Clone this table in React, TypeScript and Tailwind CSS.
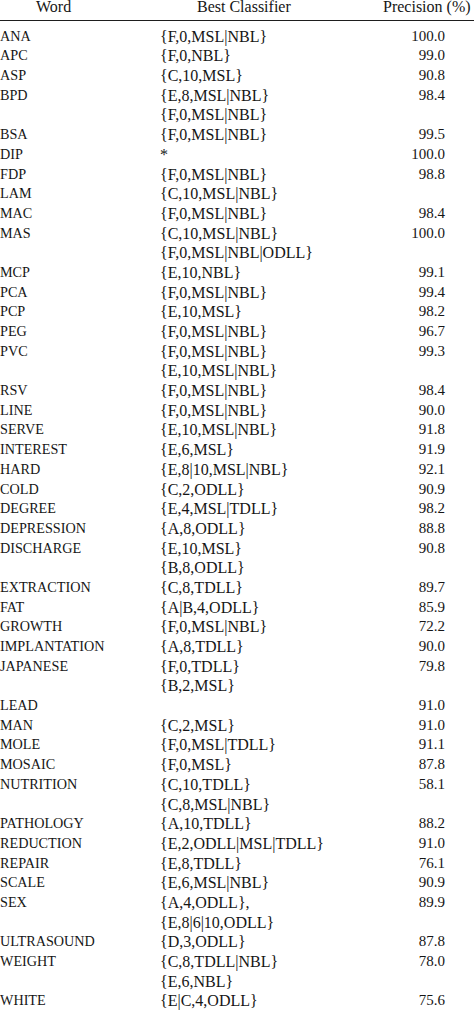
import React from "react";

type Row = [word: string, classifier: string, precision: string];

// one entry per printed line; continuation lines have an empty word
const rows: Row[] = [
  ["ANA", "{F,0,MSL|NBL}", "100.0"],
  ["APC", "{F,0,NBL}", "99.0"],
  ["ASP", "{C,10,MSL}", "90.8"],
  ["BPD", "{E,8,MSL|NBL}", "98.4"],
  ["", "{F,0,MSL|NBL}", ""],
  ["BSA", "{F,0,MSL|NBL}", "99.5"],
  ["DIP", "*", "100.0"],
  ["FDP", "{F,0,MSL|NBL}", "98.8"],
  ["LAM", "{C,10,MSL|NBL}", ""],
  ["MAC", "{F,0,MSL|NBL}", "98.4"],
  ["MAS", "{C,10,MSL|NBL}", "100.0"],
  ["", "{F,0,MSL|NBL|ODLL}", ""],
  ["MCP", "{E,10,NBL}", "99.1"],
  ["PCA", "{F,0,MSL|NBL}", "99.4"],
  ["PCP", "{E,10,MSL}", "98.2"],
  ["PEG", "{F,0,MSL|NBL}", "96.7"],
  ["PVC", "{F,0,MSL|NBL}", "99.3"],
  ["", "{E,10,MSL|NBL}", ""],
  ["RSV", "{F,0,MSL|NBL}", "98.4"],
  ["LINE", "{F,0,MSL|NBL}", "90.0"],
  ["SERVE", "{E,10,MSL|NBL}", "91.8"],
  ["INTEREST", "{E,6,MSL}", "91.9"],
  ["HARD", "{E,8|10,MSL|NBL}", "92.1"],
  ["COLD", "{C,2,ODLL}", "90.9"],
  ["DEGREE", "{E,4,MSL|TDLL}", "98.2"],
  ["DEPRESSION", "{A,8,ODLL}", "88.8"],
  ["DISCHARGE", "{E,10,MSL}", "90.8"],
  ["", "{B,8,ODLL}", ""],
  ["EXTRACTION", "{C,8,TDLL}", "89.7"],
  ["FAT", "{A|B,4,ODLL}", "85.9"],
  ["GROWTH", "{F,0,MSL|NBL}", "72.2"],
  ["IMPLANTATION", "{A,8,TDLL}", "90.0"],
  ["JAPANESE", "{F,0,TDLL}", "79.8"],
  ["", "{B,2,MSL}", ""],
  ["LEAD", "", "91.0"],
  ["MAN", "{C,2,MSL}", "91.0"],
  ["MOLE", "{F,0,MSL|TDLL}", "91.1"],
  ["MOSAIC", "{F,0,MSL}", "87.8"],
  ["NUTRITION", "{C,10,TDLL}", "58.1"],
  ["", "{C,8,MSL|NBL}", ""],
  ["PATHOLOGY", "{A,10,TDLL}", "88.2"],
  ["REDUCTION", "{E,2,ODLL|MSL|TDLL}", "91.0"],
  ["REPAIR", "{E,8,TDLL}", "76.1"],
  ["SCALE", "{E,6,MSL|NBL}", "90.9"],
  ["SEX", "{A,4,ODLL},", "89.9"],
  ["", "{E,8|6|10,ODLL}", ""],
  ["ULTRASOUND", "{D,3,ODLL}", "87.8"],
  ["WEIGHT", "{C,8,TDLL|NBL}", "78.0"],
  ["", "{E,6,NBL}", ""],
  ["WHITE", "{E|C,4,ODLL}", "75.6"],
];

const grid = "grid grid-cols-[160px_200px_85px] leading-[19.7px] h-[19.7px]";

export default function App() {
  return (
    <div
      className="w-[474px] h-[1011px] overflow-hidden bg-white text-[#161616]"
      style={{ fontFamily: '"Liberation Serif", "Times New Roman", serif' }}
    >
      <div className="-mt-[3px] pb-[3px] border-b-[1.5px] border-[#1e1e1e]">
        <div className={`${grid} text-[16px] whitespace-nowrap`}>
          <span className="pl-[36px]">Word</span>
          <span className="pl-[37px]">Best Classifier</span>
          <span className="pl-[23px]">Precision (%)</span>
        </div>
      </div>
      <div className="pt-[6px]">
        {rows.map(([word, classifier, precision], i) => (
          <div key={i} className={`${grid} whitespace-nowrap`}>
            <span className="text-[14.2px]">{word}</span>
            <span className="text-[16px]">{classifier}</span>
            <span className="text-[15px] text-right">{precision}</span>
          </div>
        ))}
      </div>
    </div>
  );
}
